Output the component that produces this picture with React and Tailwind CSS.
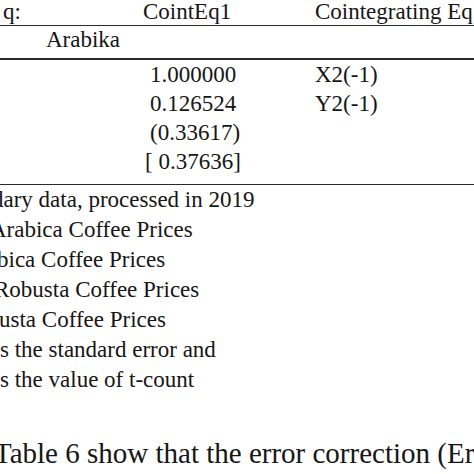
import React from 'react';

const rows = [
  { value: '1.000000', pad: 'pl-[7px]', label: 'X2(-1)' },
  { value: '0.126524', pad: 'pl-[7px]', label: 'Y2(-1)' },
  { value: '(0.33617)', pad: 'pl-[7px]', label: '' },
  { value: '[ 0.37636]', pad: 'pl-[2px]', label: '' },
];

const notes = [
  { text: 'dary data, processed in 2019', shift: 'ml-[-8px]' },
  { text: 'Arabica Coffee Prices', shift: 'ml-[-10px]' },
  { text: 'bica Coffee Prices', shift: 'ml-[-3px]' },
  { text: 'Robusta Coffee Prices', shift: 'ml-[-6px]' },
  { text: 'usta Coffee Prices', shift: 'ml-[-1px]' },
  { text: 's the standard error and', shift: 'ml-[0px]' },
  { text: 's the value of t-count', shift: 'ml-[0px]' },
];

export default function App() {
  return (
    <div
      className="w-[474px] h-[474px] overflow-hidden bg-white text-[#161616] whitespace-nowrap"
      style={{ fontFamily: '"Liberation Serif", "Times New Roman", serif' }}
    >
      {/* table */}
      <div className="text-[23px]">
        <div className="grid grid-cols-[143px_172px_1fr] h-[26px] leading-[24px] border-b border-[#2a2a2a]">
          <div className="pl-[3px]">q:</div>
          <div>CointEq1</div>
          <div>Cointegrating Eq:</div>
        </div>
        <div className="h-[34px] pt-[1px] leading-[26px] pl-[46px] border-b-2 border-[#2a2a2a]">Arabika</div>
        <div className="h-[125px] border-b border-[#2a2a2a]">
          {rows.map((r) => (
            <div key={r.value} className="grid grid-cols-[143px_172px_1fr] h-[29px] leading-[29px]">
              <div />
              <div className={r.pad}>{r.value}</div>
              <div>{r.label}</div>
            </div>
          ))}
        </div>
      </div>

      {/* notes */}
      <div className="text-[23px] leading-[30px]">
        {notes.map((n) => (
          <div key={n.text} className={n.shift}>{n.text}</div>
        ))}
      </div>

      <div className="mt-[42px] text-[29px] leading-[32px] ml-[-6px]">
        Table 6 show that the error correction (Error
      </div>
    </div>
  );
}
